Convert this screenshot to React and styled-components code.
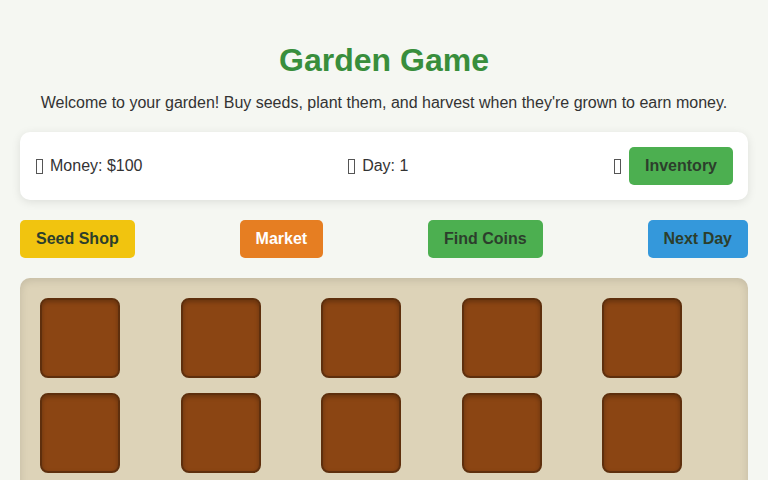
import React from 'react'
import styled, { createGlobalStyle } from 'styled-components'

const GlobalStyle = createGlobalStyle`
    body {
        margin: 0;
        background: #f5f7f2;
        font-family: "Liberation Sans", Arial, sans-serif;
        color: #333;
    }
`

const Page = styled.div`
    padding: 20px;
`

const Title = styled.h1`
    color: #388e3c;
    font-size: 32px;
    text-align: center;
    margin: 22px 0 15px;
`

const Intro = styled.p`
    text-align: center;
    font-size: 16px;
    margin: 0 0 20px;
`

const Stats = styled.div`
    background: white;
    border-radius: 10px;
    padding: 15px;
    display: flex;
    justify-content: space-between;
    align-items: center;
    box-shadow: 0 2px 10px rgba(0, 0, 0, 0.1);
    margin-bottom: 20px;
`

const Stat = styled.div`
    display: flex;
    align-items: center;
    font-size: 16px;
`

// missing-glyph box, as the emoji show in the reference
const Glyph = styled.span`
    display: inline-block;
    width: 5px;
    height: 13px;
    border: 1px solid #555;
    margin: 0 ${p => p.gap || 7}px 0 1px;
`

const Actions = styled.div`
    display: flex;
    justify-content: space-between;
    margin-bottom: 20px;
`

const Button = styled.button`
    font-family: inherit;
    font-size: 16px;
    font-weight: bold;
    line-height: 18px;
    padding: 10px 16px;
    border: none;
    border-radius: 5px;
    background: ${p => p.bg};
    color: ${p => p.fg || '#2c3e2c'};
    cursor: pointer;
`

const Garden = styled.div`
    background: #ddd3b8;
    border-radius: 10px;
    padding: 20px;
    display: grid;
    grid-template-columns: repeat(5, 1fr);
    gap: 15px;
    box-shadow: inset 0 2px 8px rgba(0, 0, 0, 0.12);
`

const Plot = styled.div`
    width: 80px;
    height: 80px;
    box-sizing: border-box;
    background: #8b4513;
    border: 2px solid #5e2f0d;
    border-radius: 8px;
    box-shadow: inset 0 2px 4px rgba(0, 0, 0, 0.25);
`

const App = () => (
    <Page>
        <GlobalStyle />
        <Title>Garden Game</Title>
        <Intro>Welcome to your garden! Buy seeds, plant them, and harvest when they're grown to earn money.</Intro>
        <Stats>
            <Stat><Glyph title="💰" />Money: $100</Stat>
            <Stat><Glyph title="📅" />Day: 1</Stat>
            <Stat><Glyph title="🎒" gap={8} /><Button bg="#4caf50">Inventory</Button></Stat>
        </Stats>
        <Actions>
            <Button bg="#f1c40f">Seed Shop</Button>
            <Button bg="#e67e22" fg="#fff">Market</Button>
            <Button bg="#4caf50">Find Coins</Button>
            <Button bg="#3498db">Next Day</Button>
        </Actions>
        <Garden>
            {Array.from({ length: 15 }).map((_, i) => <Plot key={i} />)}
        </Garden>
    </Page>
)

export default App
